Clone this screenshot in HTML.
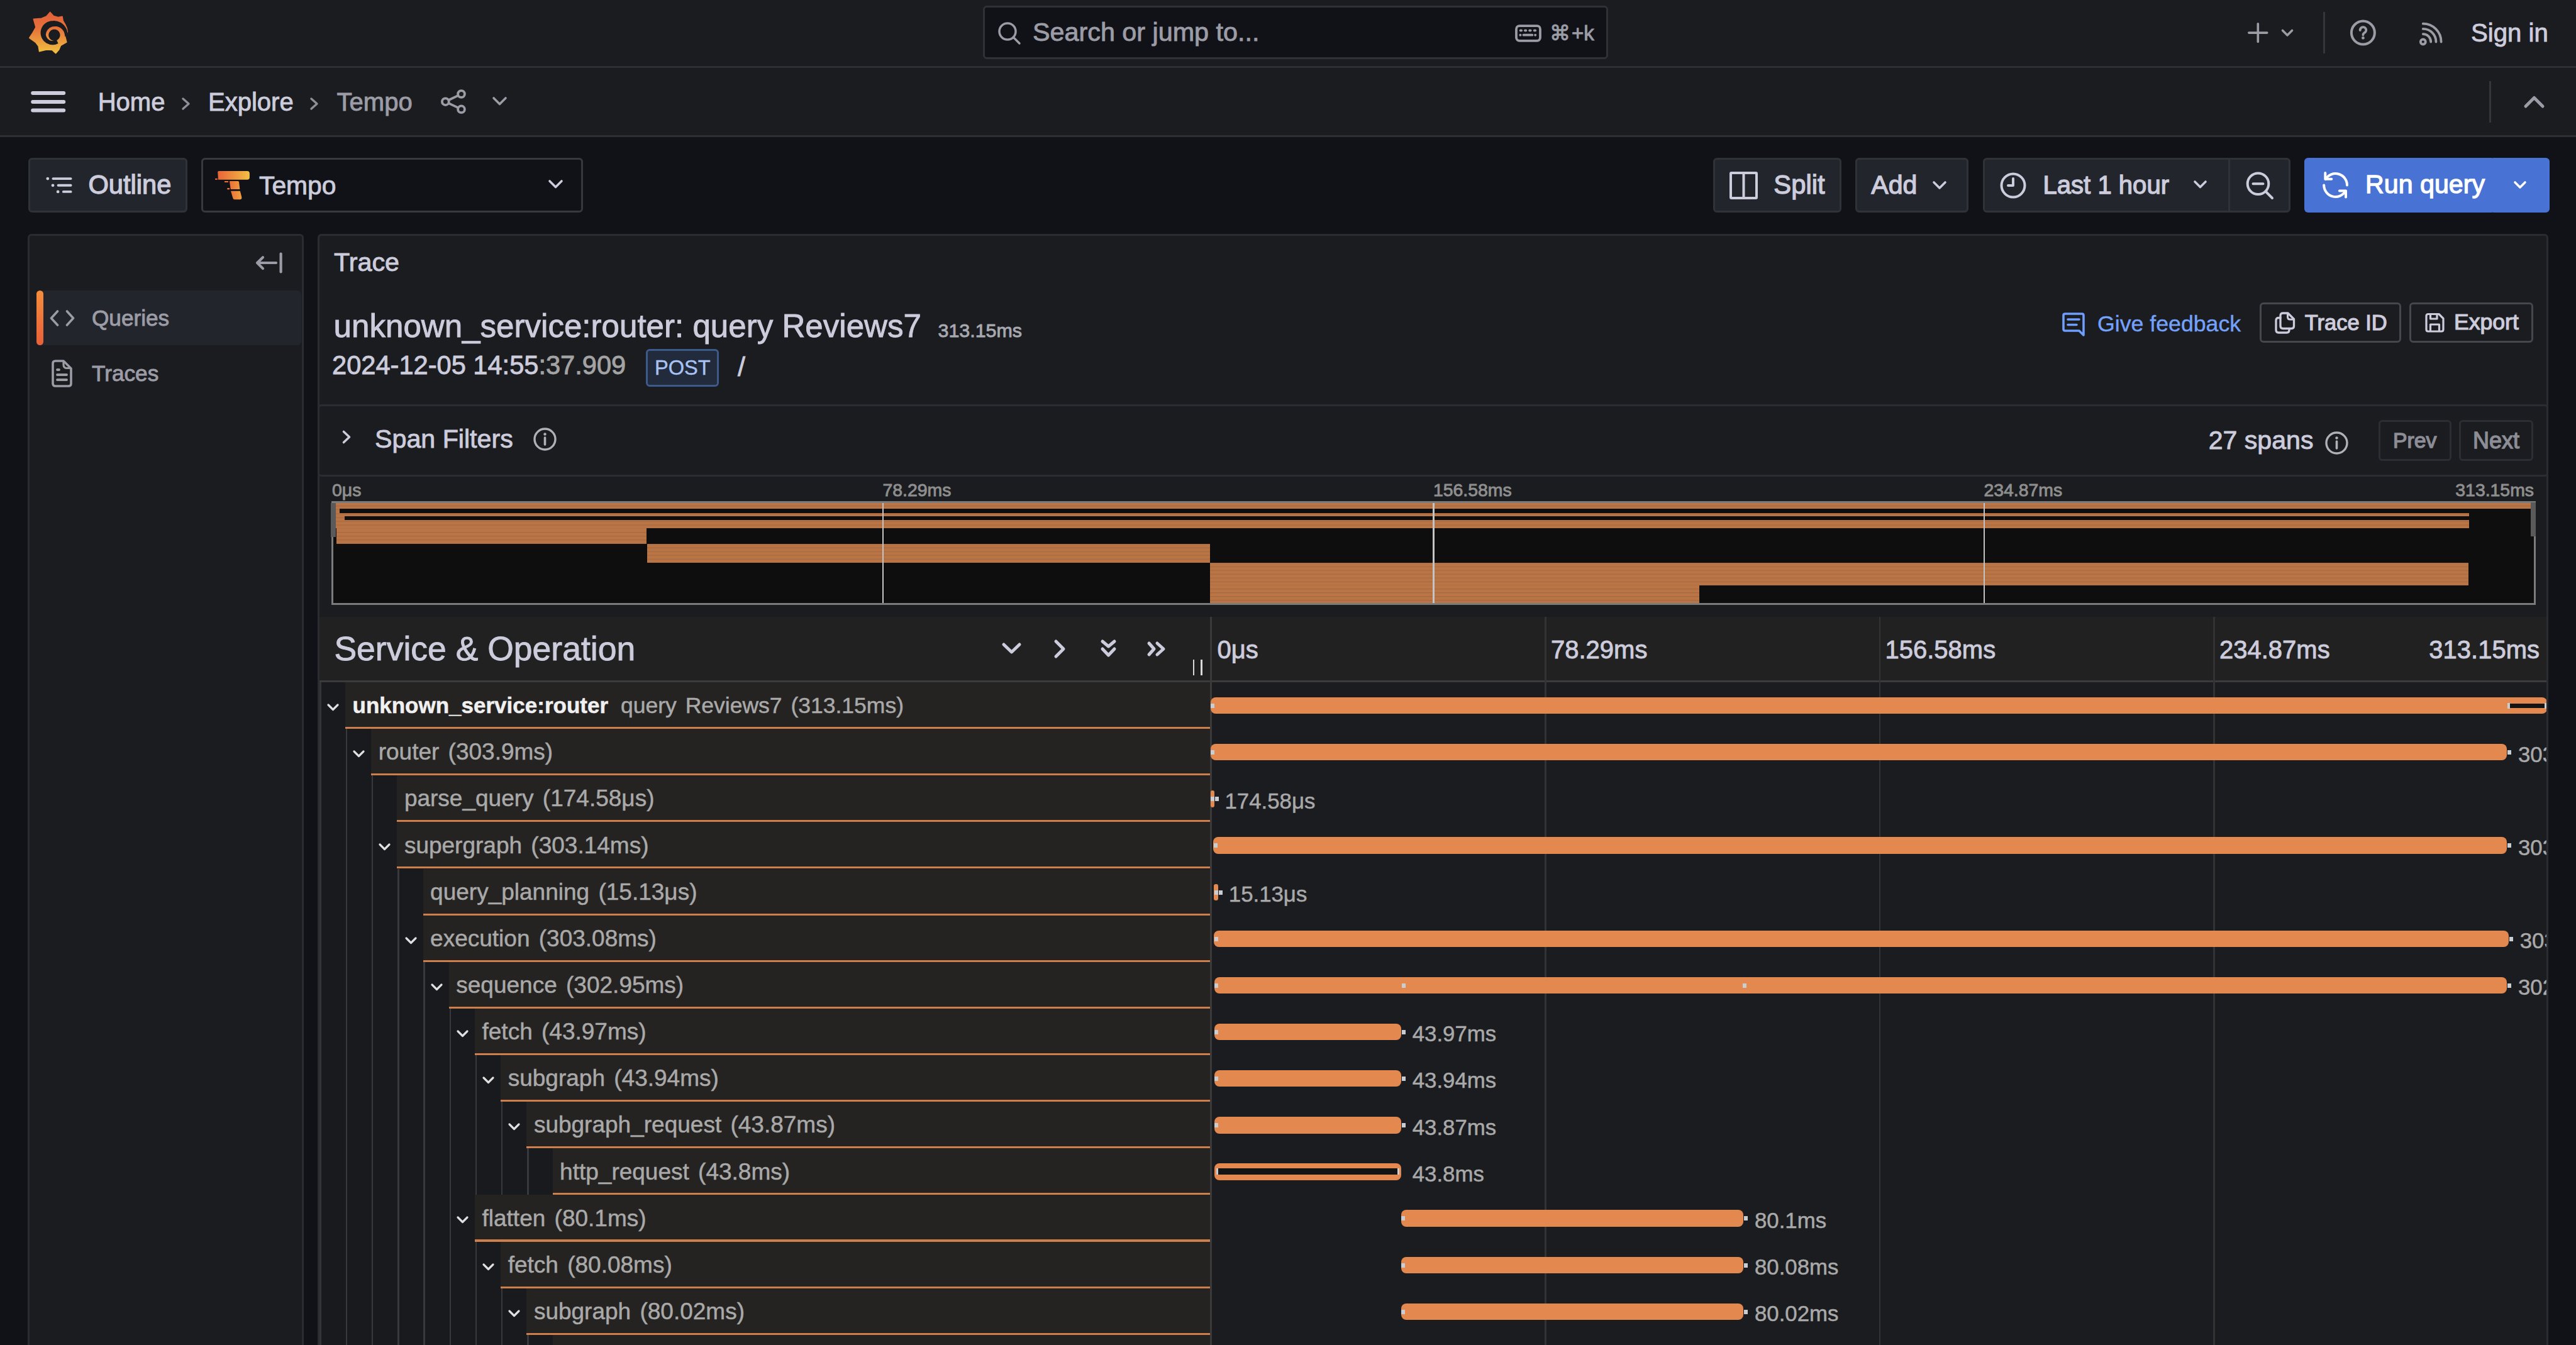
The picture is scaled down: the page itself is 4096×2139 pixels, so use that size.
<!DOCTYPE html>
<html><head><meta charset="utf-8"><style>
html,body{margin:0;padding:0;width:4096px;height:2139px;overflow:hidden;background:#111217;font-family:"Liberation Sans", sans-serif;}
.t{position:absolute;white-space:nowrap;line-height:1;-webkit-text-stroke:0.9px currentColor;}
.r{position:absolute;}
svg.r{overflow:visible}
</style></head><body>
<div class="r" style="left:0.0px;top:0.0px;width:4096.0px;height:105.0px;background:#1b1c20"></div>
<div class="r" style="left:0.0px;top:105.0px;width:4096.0px;height:3.0px;background:#2d2f34"></div>
<svg class="r" style="left:46.0px;top:19.0px;" width="62.0" height="67.0" viewBox="0 0 62 67"><defs><linearGradient id="lg" gradientUnits="userSpaceOnUse" x1="0" y1="0" x2="0" y2="67"><stop offset="0" stop-color="#e0603a"/><stop offset="0.4" stop-color="#e6733a"/><stop offset="1" stop-color="#f2c240"/></linearGradient><clipPath id="bclip"><path d="M33.5 0.4 L39.2 6.6 L46.5 8.6 L53.0 7.4 L54.2 14.2 L57.3 19.3 L60.1 25.5 L61.2 31.7 L57.3 37.9 L59.8 48.1 L50.5 53.2 L47.7 60.0 L42.6 65.6 L36.9 60.5 L27.9 60.0 L16.6 62.8 L15.2 54.3 L11.0 48.7 L0.8 41.3 L5.9 33.4 L11.0 24.4 L7.3 11.4 L20.0 10.3 L27.9 6.9 Z"/></clipPath></defs>
<path fill="url(#lg)" stroke="url(#lg)" stroke-width="1.6" stroke-linejoin="round" d="M33.5 0.4 L39.2 6.6 L46.5 8.6 L53.0 7.4 L54.2 14.2 L57.3 19.3 L60.1 25.5 L61.2 31.7 L57.3 37.9 L59.8 48.1 L50.5 53.2 L47.7 60.0 L42.6 65.6 L36.9 60.5 L27.9 60.0 L16.6 62.8 L15.2 54.3 L11.0 48.7 L0.8 41.3 L5.9 33.4 L11.0 24.4 L7.3 11.4 L20.0 10.3 L27.9 6.9 Z"/>
<path fill="#1b1c20" d="M37.8 14.2 L39.1 14.1 L40.5 14.1 L41.8 14.2 L43.2 14.4 L44.5 14.6 L45.9 15.0 L47.2 15.4 L48.5 15.9 L49.8 16.5 L51.1 17.3 L52.3 18.1 L53.5 19.0 L54.6 20.0 L55.7 21.0 L56.7 22.2 L57.6 23.4 L58.4 24.8 L59.2 26.1 L59.9 27.6 L60.4 29.1 L60.9 30.7 L61.3 32.3 L61.0 33.9 L60.2 35.4 L59.2 36.9 L58.2 38.2 L57.1 39.4 L55.9 40.4 L55.1 41.5 L54.4 42.7 L53.7 43.8 L52.9 44.9 L52.1 45.9 L51.1 46.9 L50.1 47.8 L49.1 48.6 L48.0 49.4 L46.8 50.1 L45.6 50.6 L44.4 51.1 L43.1 51.6 L41.8 51.9 L40.5 52.1 L39.1 52.3 L37.8 52.3 L36.5 52.3 L35.1 52.1 L33.8 51.9 L32.5 51.6 L31.2 51.1 L30.0 50.6 L28.8 50.1 L27.6 49.4 L26.5 48.6 L25.5 47.8 L24.5 46.9 L23.5 45.9 L22.7 44.9 L21.9 43.8 L21.2 42.7 L20.5 41.5 L20.0 40.3 L19.5 39.0 L19.2 37.7 L18.9 36.4 L18.7 35.1 L18.6 33.8 L18.6 32.4 L18.7 31.1 L18.9 29.8 L19.2 28.5 L19.5 27.2 L20.0 25.9 L20.6 24.7 L21.2 23.5 L21.9 22.4 L22.7 21.3 L23.6 20.3 L24.5 19.4 L25.5 18.5 L26.6 17.7 L27.7 17.0 L28.9 16.3 L30.1 15.7 L31.3 15.3 L32.6 14.9 L33.9 14.6 L35.2 14.3 L36.5 14.2 L37.8 14.2 Z"/>
<path fill="url(#lg)" clip-path="url(#bclip)" d="M39.6 45.9 L38.8 46.0 L37.9 46.1 L37.0 46.1 L36.1 46.0 L35.2 45.8 L34.3 45.5 L33.4 45.2 L32.5 44.7 L31.6 44.1 L30.8 43.5 L30.1 42.8 L29.3 42.0 L28.7 41.1 L28.1 40.1 L27.6 39.1 L27.2 38.0 L26.9 36.8 L26.9 35.6 L27.1 34.5 L27.3 33.3 L27.7 32.2 L28.1 31.1 L28.7 30.0 L29.3 29.0 L30.0 28.1 L30.8 27.2 L31.7 26.4 L32.6 25.6 L33.6 25.0 L34.6 24.4 L35.7 24.0 L36.9 23.6 L38.0 23.3 L39.2 23.2 L40.4 23.1 L41.6 23.0 L42.8 23.0 L44.1 23.1 L45.3 23.3 L46.5 23.7 L47.7 24.1 L48.9 24.7 L50.0 25.3 L51.1 26.1 L52.1 27.0 L53.1 27.9 L53.9 29.0 L54.7 30.1 L55.4 31.3 L56.0 32.6 L56.4 34.0 L56.8 35.4 L57.0 36.8 L57.3 38.3 L57.5 39.8 L57.5 41.4 L57.4 43.0 L57.1 44.6 L56.7 46.2 L56.1 47.8 L55.3 49.3 L54.7 51.1 L53.8 52.8 L52.8 54.5 L51.5 56.1 L50.1 57.6 L44.2 45.0 L44.9 44.7 L45.6 44.3 L46.2 43.8 L46.8 43.2 L47.4 42.6 L47.9 42.0 L48.3 41.3 L48.6 40.6 L49.0 39.9 L49.2 39.2 L49.4 38.4 L49.5 37.6 L49.5 36.8 L49.5 36.0 L49.4 35.2 L49.2 34.4 L49.0 33.7 L48.6 33.0 L48.3 32.2 L47.9 31.6 L47.4 31.0 L46.8 30.4 L46.2 29.8 L45.6 29.3 L45.0 28.9 L44.2 28.6 L43.5 28.2 L42.8 28.0 L42.0 27.8 L41.2 27.7 L40.4 27.7 L39.6 27.7 L38.8 27.8 L38.0 28.0 L37.3 28.2 L36.6 28.6 L35.8 28.9 L35.2 29.3 L34.6 29.8 L34.0 30.4 L33.4 31.0 L32.9 31.6 L32.5 32.2 L32.2 33.0 L31.8 33.7 L31.6 34.4 L31.4 35.2 L31.3 36.0 L31.3 36.8 L31.3 37.6 L31.4 38.4 L31.6 39.2 L31.8 39.9 L32.2 40.6 L32.5 41.3 L32.9 42.0 L33.4 42.6 L34.0 43.2 L34.6 43.8 L35.2 44.3 L35.9 44.7 L36.6 45.0 L37.3 45.4 L38.0 45.6 L38.8 45.8 L39.6 45.9 Z"/></svg>
<div class="r" style="left:1563.0px;top:9.0px;width:994.0px;height:85.0px;background:#111217;border:3px solid #2f3136;border-radius:6px;box-sizing:border-box"></div>
<svg class="r" style="left:1585.0px;top:33.0px;" width="40.0" height="38.0" viewBox="0 0 40 38"><circle cx="17" cy="17" r="13" fill="none" stroke="#9b9ca6" stroke-width="3.5"/><line x1="26.5" y1="26.5" x2="36" y2="36" stroke="#9b9ca6" stroke-width="3.5" stroke-linecap="round"/></svg>
<div class="t " style="left:1642.0px;top:31.0px;font-size:41.30px;color:#9b9ca6;font-weight:400;">Search or jump to...</div>
<svg class="r" style="left:2408.0px;top:39.0px;" width="44.0" height="28.0" viewBox="0 0 44 28"><rect x="3" y="2.2" width="38" height="23.6" rx="5" fill="none" stroke="#9b9ca6" stroke-width="3.8"/><g fill="#9b9ca6"><ellipse cx="10.4" cy="9.4" rx="2.7" ry="2"/><ellipse cx="17.6" cy="9.4" rx="2.7" ry="2"/><ellipse cx="24.9" cy="9.4" rx="2.7" ry="2"/><ellipse cx="32.5" cy="9.4" rx="2.7" ry="2"/><circle cx="9.4" cy="16.7" r="2"/><circle cx="33.2" cy="16.7" r="2"/></g><path d="M14.5 16.7 H28.3" stroke="#9b9ca6" stroke-width="3.8" stroke-linecap="round"/></svg>
<div class="t " style="left:2464.0px;top:36.1px;font-size:33.00px;color:#9b9ca6;font-weight:400;">&#8984;<span style="margin-left:2px">+</span>k</div>
<svg class="r" style="left:3572.0px;top:34.0px;" width="38.0" height="38.0" viewBox="0 0 38 38"><path d="M18.3 3.8 V32.5 M3.8 18.1 H32.8" stroke="#9b9ca6" stroke-width="3.6" stroke-linecap="round"/></svg>
<svg class="r" style="left:3625.0px;top:44.0px;" width="24.0" height="16.0" viewBox="0 0 24 16"><path d="M4.5 4.5 L12 12 L19.5 4.5" fill="none" stroke="#9b9ca6" stroke-width="3.6" stroke-linecap="round" stroke-linejoin="round"/></svg>
<div class="r" style="left:3694.0px;top:19.0px;width:3.0px;height:66.0px;background:#34363b"></div>
<svg class="r" style="left:3734.0px;top:29.0px;" width="46.0" height="46.0" viewBox="0 0 46 46"><circle cx="23.4" cy="23.1" r="18.5" fill="none" stroke="#9b9ca6" stroke-width="4"/><path d="M18.7 19 A4.8 4.8 0 1 1 25.3 23.3 Q23.4 24.5 23.4 26.6" fill="none" stroke="#9b9ca6" stroke-width="3.8" stroke-linecap="round"/><circle cx="23.4" cy="31.3" r="2.4" fill="#9b9ca6"/></svg>
<svg class="r" style="left:3844.0px;top:34.0px;" width="42.0" height="42.0" viewBox="0 0 42 42"><circle cx="8.8" cy="32.5" r="4" fill="none" stroke="#9b9ca6" stroke-width="3.8"/><path d="M8.8 20.1 A12.4 12.4 0 0 1 21.2 32.5 M8.8 11.9 A20.6 20.6 0 0 1 29.4 32.5 M8.8 3.7 A28.8 28.8 0 0 1 37.6 32.5" fill="none" stroke="#9b9ca6" stroke-width="3.8" stroke-linecap="round"/></svg>
<div class="t " style="left:3929.0px;top:33.0px;font-size:40.20px;color:#ccccdc;font-weight:400;">Sign in</div>
<div class="r" style="left:0.0px;top:108.0px;width:4096.0px;height:107.0px;background:#1b1c20"></div>
<div class="r" style="left:0.0px;top:215.0px;width:4096.0px;height:3.0px;background:#2d2f34"></div>
<svg class="r" style="left:48.0px;top:144.0px;" width="58.0" height="36.0" viewBox="0 0 58 36"><path d="M4.2 4 H53.2 M4.2 18.1 H53.2 M4.2 31.6 H53.2" stroke="#ccccdc" stroke-width="6" stroke-linecap="round"/></svg>
<div class="t " style="left:155.7px;top:142.1px;font-size:40.00px;color:#ccccdc;font-weight:400;">Home</div>
<svg class="r" style="left:288.0px;top:154.0px;" width="16.0" height="22.0" viewBox="0 0 16 22"><path d="M3 3 L12 11 L3 19" fill="none" stroke="#8e8f99" stroke-width="3.4" stroke-linecap="round" stroke-linejoin="round"/></svg>
<div class="t " style="left:331.0px;top:142.1px;font-size:40.00px;color:#ccccdc;font-weight:400;">Explore</div>
<svg class="r" style="left:492.0px;top:154.0px;" width="16.0" height="22.0" viewBox="0 0 16 22"><path d="M3 3 L12 11 L3 19" fill="none" stroke="#8e8f99" stroke-width="3.4" stroke-linecap="round" stroke-linejoin="round"/></svg>
<div class="t " style="left:535.6px;top:142.1px;font-size:40.00px;color:#9b9ca6;font-weight:400;">Tempo</div>
<svg class="r" style="left:699.0px;top:139.0px;" width="45.0" height="45.0" viewBox="0 0 45 45"><circle cx="34.5" cy="10.5" r="5.4" fill="none" stroke="#9b9ca6" stroke-width="3.8"/><circle cx="9.3" cy="22.7" r="5.4" fill="none" stroke="#9b9ca6" stroke-width="3.8"/><circle cx="34.5" cy="34.8" r="5.4" fill="none" stroke="#9b9ca6" stroke-width="3.8"/><path d="M14.2 20.3 L29.6 12.9 M14.2 25.1 L29.6 32.4" stroke="#9b9ca6" stroke-width="3.8"/></svg>
<svg class="r" style="left:782.0px;top:153.0px;" width="25.0" height="18.0" viewBox="0 0 25 18"><path d="M3 3 L12.5 12.5 L22 3" fill="none" stroke="#9b9ca6" stroke-width="3.6" stroke-linecap="round" stroke-linejoin="round"/></svg>
<div class="r" style="left:3958.0px;top:129.0px;width:3.0px;height:66.0px;background:#34363b"></div>
<svg class="r" style="left:4013.0px;top:151.0px;" width="33.0" height="22.0" viewBox="0 0 33 22"><path d="M3 18 L16.5 4.5 L30 18" fill="none" stroke="#9b9ca6" stroke-width="5" stroke-linecap="round" stroke-linejoin="round"/></svg>
<div class="r" style="left:44.6px;top:251.0px;width:253.0px;height:87.0px;background:#22252b;border:3px solid #2f3237;border-radius:6px;box-sizing:border-box"></div>
<svg class="r" style="left:72.0px;top:280.0px;" width="46.0" height="30.0" viewBox="0 0 46 30"><g fill="#ccccdc"><circle cx="3.8" cy="4.1" r="2.4"/><circle cx="12" cy="14.8" r="2.4"/><circle cx="20.1" cy="24.9" r="2.4"/></g><path d="M12.4 4.1 H40.6 M20.6 14.8 H40.6 M28.8 24.9 H40.6" stroke="#ccccdc" stroke-width="3.9" stroke-linecap="round"/></svg>
<div class="t " style="left:140.5px;top:273.1px;font-size:41.60px;color:#ccccdc;font-weight:400;-webkit-text-stroke:1.3px currentColor">Outline</div>
<div class="r" style="left:320.0px;top:251.0px;width:607.0px;height:87.0px;background:#111217;border:3px solid #37393e;border-radius:6px;box-sizing:border-box"></div>
<svg class="r" style="left:340.0px;top:270.0px;" width="58.0" height="50.0" viewBox="0 0 58 50"><defs><linearGradient id="tg" gradientUnits="userSpaceOnUse" x1="6" y1="0" x2="57" y2="0"><stop offset="0" stop-color="#e8643a"/><stop offset="1" stop-color="#f3c045"/></linearGradient><linearGradient id="tg2" gradientUnits="userSpaceOnUse" x1="25" y1="0" x2="45" y2="0"><stop offset="0" stop-color="#ea7036"/><stop offset="1" stop-color="#f2a13f"/></linearGradient></defs>
<path fill="url(#tg)" d="M6.2 3.5 Q6.2 1.9 8 1.9 H53 Q56.9 1.9 56.9 6 V12 Q56.9 15.8 53 15.8 H7 Z"/>
<rect x="2" y="13.8" width="3.8" height="2" fill="#e8643a"/>
<path fill="url(#tg2)" d="M25 17.9 H38.5 Q39.8 17.9 40 19.5 L41.4 31 H26.7 Z"/>
<rect x="17" y="18" width="6" height="2" fill="#ea7036"/>
<rect x="21.3" y="29" width="3.7" height="2.4" fill="#ea7036"/>
<path fill="url(#tg2)" d="M27 33.8 H41.8 L44.3 43.5 Q44.8 47.3 41.5 47.3 H33 Q30.8 47.3 30.3 45 Z"/></svg>
<div class="t " style="left:412.0px;top:274.5px;font-size:40.80px;color:#ccccdc;font-weight:400;">Tempo</div>
<svg class="r" style="left:871.0px;top:285.0px;" width="25.0" height="18.0" viewBox="0 0 25 18"><path d="M3 3 L12.5 12.5 L22 3" fill="none" stroke="#ccccdc" stroke-width="3.6" stroke-linecap="round" stroke-linejoin="round"/></svg>
<div class="r" style="left:2724.0px;top:251.0px;width:204.0px;height:87.0px;background:#22252b;border:3px solid #2f3237;border-radius:6px;box-sizing:border-box"></div>
<svg class="r" style="left:2750.0px;top:273.0px;" width="45.0" height="44.0" viewBox="0 0 45 44"><rect x="2" y="2" width="41" height="40" rx="1" fill="none" stroke="#ccccdc" stroke-width="4"/><line x1="22.5" y1="2" x2="22.5" y2="42" stroke="#ccccdc" stroke-width="4"/></svg>
<div class="t " style="left:2820.3px;top:272.9px;font-size:41.80px;color:#ccccdc;font-weight:400;-webkit-text-stroke:1.3px currentColor">Split</div>
<div class="r" style="left:2950.0px;top:251.0px;width:180.0px;height:87.0px;background:#22252b;border:3px solid #2f3237;border-radius:6px;box-sizing:border-box"></div>
<div class="t " style="left:2975.3px;top:273.5px;font-size:41.10px;color:#ccccdc;font-weight:400;-webkit-text-stroke:1.3px currentColor">Add</div>
<svg class="r" style="left:3072.0px;top:287.0px;" width="24.0" height="20.0" viewBox="0 0 24 20"><path d="M3 3 L12 12 L21 3" fill="none" stroke="#ccccdc" stroke-width="3.6" stroke-linecap="round" stroke-linejoin="round"/></svg>
<div class="r" style="left:3152.6px;top:251.0px;width:489.4px;height:87.0px;background:#22252b;border:3px solid #2f3237;border-radius:6px;box-sizing:border-box"></div>
<div class="r" style="left:3543.0px;top:254.0px;width:3.0px;height:81.0px;background:#2f3237"></div>
<svg class="r" style="left:3179.0px;top:272.5px;" width="44.0" height="44.0" viewBox="0 0 44 44"><circle cx="22" cy="22" r="18.5" fill="none" stroke="#ccccdc" stroke-width="4"/><path d="M22 11 V22 H14" fill="none" stroke="#ccccdc" stroke-width="4" stroke-linecap="round" stroke-linejoin="round"/></svg>
<div class="t " style="left:3248.5px;top:274.4px;font-size:40.10px;color:#ccccdc;font-weight:400;-webkit-text-stroke:1.3px currentColor">Last 1 hour</div>
<svg class="r" style="left:3487.0px;top:286.0px;" width="24.0" height="18.0" viewBox="0 0 24 18"><path d="M3 3 L11.5 11.5 L20 3" fill="none" stroke="#ccccdc" stroke-width="3.6" stroke-linecap="round" stroke-linejoin="round"/></svg>
<svg class="r" style="left:3571.0px;top:273.0px;" width="46.0" height="46.0" viewBox="0 0 46 46"><circle cx="19.5" cy="19.2" r="16.8" fill="none" stroke="#ccccdc" stroke-width="4"/><path d="M11.5 19.2 H27.5 M31.5 31.5 L42 42" stroke="#ccccdc" stroke-width="4" stroke-linecap="round"/></svg>
<div class="r" style="left:3664.0px;top:251.0px;width:299.0px;height:87.0px;background:#4872d4;border-radius:6px 1px 1px 6px"></div>
<div class="r" style="left:3962.5px;top:251.0px;width:91.5px;height:87.0px;background:#4872d4;border-radius:1px 6px 6px 1px"></div>
<svg class="r" style="left:3691.0px;top:273.0px;" width="46.0" height="46.0" viewBox="0 0 46 46"><path d="M6.8 12.1 A18.4 18.4 0 0 1 41 21.6 M4.2 21.6 A18.4 18.4 0 0 0 38.5 30.8" fill="none" stroke="#ffffff" stroke-width="4" stroke-linecap="round"/><path d="M6.3 2 V11.8 H16.3 M28.9 30.6 H39 V40.6" fill="none" stroke="#ffffff" stroke-width="4" stroke-linecap="round" stroke-linejoin="round"/></svg>
<div class="t " style="left:3761.0px;top:273.4px;font-size:41.20px;color:#ffffff;font-weight:400;-webkit-text-stroke:1.3px currentColor">Run query</div>
<svg class="r" style="left:3996.0px;top:287.0px;" width="23.0" height="17.0" viewBox="0 0 23 17"><path d="M3 3 L11 11 L19 3" fill="none" stroke="#ffffff" stroke-width="3.6" stroke-linecap="round" stroke-linejoin="round"/></svg>
<div class="r" style="left:44.0px;top:372.0px;width:439.0px;height:1800.0px;background:#1b1c20;border:3px solid #2a2c31;border-radius:6px;box-sizing:border-box"></div>
<svg class="r" style="left:406.0px;top:399.0px;" width="46.0" height="37.0" viewBox="0 0 46 37"><path d="M3 19 H33 M12 10.2 L3 19 L12 27.9" fill="none" stroke="#9b9ca6" stroke-width="4.2" stroke-linecap="round" stroke-linejoin="round"/><line x1="40.6" y1="4.5" x2="40.6" y2="33.5" stroke="#9b9ca6" stroke-width="4.2" stroke-linecap="round"/></svg>
<div class="r" style="left:58.0px;top:462.0px;width:421.0px;height:87.0px;background:#22252b;border-radius:6px"></div>
<div class="r" style="left:57.5px;top:462.0px;width:11.5px;height:87.0px;background:linear-gradient(#f58d3c,#e8603a);border-radius:6px"></div>
<svg class="r" style="left:78.0px;top:491.0px;" width="42.0" height="30.0" viewBox="0 0 42 30"><path d="M13.5 4 L3.5 15 L13.5 26 M28.5 4 L38.5 15 L28.5 26" fill="none" stroke="#9b9ca6" stroke-width="3.6" stroke-linecap="round" stroke-linejoin="round"/></svg>
<div class="t " style="left:146.0px;top:488.0px;font-size:35.20px;color:#9b9ca6;font-weight:400;">Queries</div>
<svg class="r" style="left:80.0px;top:571.0px;" width="38.0" height="46.0" viewBox="0 0 38 46"><path d="M4 7 Q4 3 8 3 H21 L33 15 V39 Q33 43 29 43 H8 Q4 43 4 39 Z" fill="none" stroke="#9b9ca6" stroke-width="3.6" stroke-linejoin="round"/><path d="M21 3.5 V9 Q21 14.5 26.5 14.5 H32.5" fill="none" stroke="#9b9ca6" stroke-width="3.2"/><path d="M11 17 H14 M11 25 H26 M11 33 H26" fill="none" stroke="#9b9ca6" stroke-width="3.8" stroke-linecap="round"/></svg>
<div class="t " style="left:146.0px;top:575.7px;font-size:35.20px;color:#9b9ca6;font-weight:400;">Traces</div>
<div class="r" style="left:505.0px;top:372.0px;width:3547.0px;height:1800.0px;background:#1b1c20;border:3px solid #2a2c31;border-radius:6px;box-sizing:border-box"></div>
<div class="t " style="left:531.0px;top:396.6px;font-size:41.30px;color:#ccccdc;font-weight:400;">Trace</div>
<div class="t " style="left:530.6px;top:492.7px;font-size:51.10px;color:#ccccdc;font-weight:400;">unknown_service:router: query Reviews7</div>
<div class="t " style="left:1491.5px;top:510.3px;font-size:30.40px;color:#a7a8b0;font-weight:400;">313.15ms</div>
<div class="t " style="left:528.0px;top:560.4px;font-size:41.60px;color:#ccccdc;font-weight:400;">2024-12-05 14:55<span style="color:#a3a3a3">:37.909</span></div>
<div class="r" style="left:1026.5px;top:554.5px;width:116.5px;height:60.0px;background:#222b3c;border:3px solid #3d5a8c;border-radius:6px;box-sizing:border-box"></div>
<div class="t " style="left:1041.0px;top:569.2px;font-size:32.60px;color:#a8c3f3;font-weight:400;-webkit-text-stroke:0.4px currentColor">POST</div>
<div class="t " style="left:1173.0px;top:562.1px;font-size:43.00px;color:#ccccdc;font-weight:400;">/</div>
<svg class="r" style="left:3278.0px;top:497.0px;" width="38.0" height="38.0" viewBox="0 0 38 38"><path d="M3 4.5 Q3 2 5.5 2 H32.5 Q35 2 35 4.5 V36 L28 29 H5.5 Q3 29 3 26.5 Z" fill="none" stroke="#6e9fff" stroke-width="3.6" stroke-linejoin="round"/><path d="M10 11 H28 M10 19.5 H24" stroke="#6e9fff" stroke-width="3.6" stroke-linecap="round"/></svg>
<div class="t " style="left:3335.0px;top:497.8px;font-size:35.70px;color:#74a2fa;font-weight:400;-webkit-text-stroke:0.4px currentColor">Give feedback</div>
<div class="r" style="left:3593.0px;top:481.0px;width:225.0px;height:64.0px;background:#1b1c20;border:3px solid #45474d;border-radius:6px;box-sizing:border-box"></div>
<svg class="r" style="left:3616.0px;top:496.0px;" width="34.0" height="36.0" viewBox="0 0 34 36"><path d="M10 6 Q10 2 14 2 H22 L31.5 11.5 V22.5 Q31.5 26.5 27.5 26.5 H14 Q10 26.5 10 22.5 Z" fill="none" stroke="#ccccdc" stroke-width="3.3" stroke-linejoin="round"/><path d="M21.5 2.5 V8 Q21.5 12 25.5 12 H31" fill="none" stroke="#ccccdc" stroke-width="3"/><path d="M10 9.5 H7 Q3 9.5 3 13.5 V29 Q3 33 7 33 H20 Q24 33 24 29 V26.5" fill="none" stroke="#ccccdc" stroke-width="3.3" stroke-linejoin="round" stroke-linecap="round"/></svg>
<div class="t " style="left:3664.7px;top:496.3px;font-size:34.50px;color:#ccccdc;font-weight:400;-webkit-text-stroke:1.2px currentColor">Trace ID</div>
<div class="r" style="left:3831.0px;top:481.0px;width:197.0px;height:64.0px;background:#1b1c20;border:3px solid #45474d;border-radius:6px;box-sizing:border-box"></div>
<svg class="r" style="left:3855.0px;top:497.0px;" width="33.0" height="33.0" viewBox="0 0 33 33"><path d="M3 5.5 Q3 2.5 6 2.5 H23 L30 9.5 V27 Q30 30 27 30 H6 Q3 30 3 27 Z" fill="none" stroke="#ccccdc" stroke-width="3.2" stroke-linejoin="round"/><path d="M9.5 2.5 V10 H20 V2.5 M9.5 30 V19 H23.5 V30" fill="none" stroke="#ccccdc" stroke-width="3.2" stroke-linejoin="round"/></svg>
<div class="t " style="left:3902.0px;top:495.4px;font-size:35.60px;color:#ccccdc;font-weight:400;-webkit-text-stroke:1.2px currentColor">Export</div>
<div class="r" style="left:505.0px;top:643.0px;width:3547.0px;height:114.5px;border:3px solid #2a2c31;border-radius:6px;box-sizing:border-box"></div>
<svg class="r" style="left:543.0px;top:683.0px;" width="17.0" height="24.0" viewBox="0 0 17 24"><path d="M3.5 3.5 L12.5 12 L3.5 20.5" fill="none" stroke="#ccccdc" stroke-width="3.6" stroke-linecap="round" stroke-linejoin="round"/></svg>
<div class="t " style="left:596.0px;top:678.1px;font-size:41.20px;color:#ccccdc;font-weight:400;">Span Filters</div>
<svg class="r" style="left:847.0px;top:679.0px;" width="39.0" height="39.0" viewBox="0 0 39 39"><circle cx="19.5" cy="19.5" r="16.5" fill="none" stroke="#b0b1b8" stroke-width="3.4"/><path d="M19.5 17 V28" stroke="#b0b1b8" stroke-width="3.6" stroke-linecap="round"/><circle cx="19.5" cy="11.5" r="2.2" fill="#b0b1b8"/></svg>
<div class="t " style="left:3511.7px;top:680.2px;font-size:41.10px;color:#ccccdc;font-weight:400;">27 spans</div>
<svg class="r" style="left:3696.0px;top:685.0px;" width="39.0" height="39.0" viewBox="0 0 39 39"><circle cx="19.5" cy="19.5" r="16.5" fill="none" stroke="#b0b1b8" stroke-width="3.4"/><path d="M19.5 17 V28" stroke="#b0b1b8" stroke-width="3.6" stroke-linecap="round"/><circle cx="19.5" cy="11.5" r="2.2" fill="#b0b1b8"/></svg>
<div class="r" style="left:3781.5px;top:668.4px;width:116.5px;height:64.3px;border:3px solid #2c2e33;border-radius:6px;box-sizing:border-box"></div>
<div class="t " style="left:3805.0px;top:684.4px;font-size:33.80px;color:#8c8d96;font-weight:400;-webkit-text-stroke:1.3px currentColor">Prev</div>
<div class="r" style="left:3909.7px;top:668.4px;width:118.0px;height:64.3px;border:3px solid #2c2e33;border-radius:6px;box-sizing:border-box"></div>
<div class="t " style="left:3932.0px;top:682.5px;font-size:36.00px;color:#8c8d96;font-weight:400;-webkit-text-stroke:1.3px currentColor">Next</div>
<div class="t " style="left:528.0px;top:764.8px;font-size:28.40px;color:#8e8e8e;font-weight:400;">0&#956;s</div>
<div class="t " style="left:1403.5px;top:764.8px;font-size:28.40px;color:#8e8e8e;font-weight:400;">78.29ms</div>
<div class="t " style="left:2279.0px;top:764.8px;font-size:28.40px;color:#8e8e8e;font-weight:400;">156.58ms</div>
<div class="t " style="left:3154.5px;top:764.8px;font-size:28.40px;color:#8e8e8e;font-weight:400;">234.87ms</div>
<div class="t " style="right:67.0px;top:764.8px;font-size:28.40px;color:#8e8e8e;font-weight:400;">313.15ms</div>
<div class="r" style="left:527.0px;top:797.0px;width:3505.0px;height:165.0px;background:#0e0e0f;border:3px solid #7b7b7b;box-sizing:border-box"></div>
<div class="r" style="left:533.0px;top:800.0px;width:3493.0px;height:8.6px;background:repeating-linear-gradient(to bottom,#b97545 0px,#b97545 3.5px,#a8693f 4.5px,#b97545 6px);background-position:0 0.0px"></div>
<div class="r" style="left:533.0px;top:808.6px;width:3393.0px;height:31.4px;background:repeating-linear-gradient(to bottom,#b97545 0px,#b97545 3.5px,#a8693f 4.5px,#b97545 6px);background-position:0 3.4px"></div>
<div class="r" style="left:540.0px;top:808.6px;width:3386.0px;height:7.0px;background:#0e0e0f"></div>
<div class="r" style="left:548.0px;top:821.4px;width:3378.0px;height:5.9px;background:#0e0e0f"></div>
<div class="r" style="left:535.0px;top:840.0px;width:493.0px;height:24.5px;background:repeating-linear-gradient(to bottom,#b97545 0px,#b97545 3.5px,#a8693f 4.5px,#b97545 6px);background-position:0 2.0px"></div>
<div class="r" style="left:1029.0px;top:864.5px;width:895.0px;height:30.0px;background:repeating-linear-gradient(to bottom,#b97545 0px,#b97545 3.5px,#a8693f 4.5px,#b97545 6px);background-position:0 1.5px"></div>
<div class="r" style="left:1924.0px;top:894.5px;width:2001.0px;height:36.5px;background:repeating-linear-gradient(to bottom,#b97545 0px,#b97545 3.5px,#a8693f 4.5px,#b97545 6px);background-position:0 1.5px"></div>
<div class="r" style="left:1924.0px;top:931.0px;width:778.0px;height:28.0px;background:repeating-linear-gradient(to bottom,#b97545 0px,#b97545 3.5px,#a8693f 4.5px,#b97545 6px);background-position:0 1.0px"></div>
<div class="r" style="left:1402.5px;top:800.0px;width:2.5px;height:159.0px;background:#c4c4c4"></div>
<div class="r" style="left:2278.0px;top:800.0px;width:2.5px;height:159.0px;background:#c4c4c4"></div>
<div class="r" style="left:3153.5px;top:800.0px;width:2.5px;height:159.0px;background:#c4c4c4"></div>
<div class="r" style="left:525.5px;top:800.0px;width:8.0px;height:54.0px;background:#5a5a5a"></div>
<div class="r" style="left:4024.0px;top:799.0px;width:8.0px;height:54.0px;background:#5a5a5a"></div>
<div class="r" style="left:508.0px;top:980.5px;width:3541.0px;height:101.5px;background:#212121"></div>
<div class="r" style="left:508.0px;top:1082.0px;width:3541.0px;height:3.0px;background:#3b3b3b"></div>
<div class="t " style="left:531.4px;top:1004.7px;font-size:53.50px;color:#ccccdc;font-weight:400;">Service &amp; Operation</div>
<svg class="r" style="left:1592.0px;top:1021.0px;" width="33.0" height="21.0" viewBox="0 0 33 21"><path d="M4 4 L16.5 16 L29 4" fill="none" stroke="#ccccdc" stroke-width="5" stroke-linecap="round" stroke-linejoin="round"/></svg>
<svg class="r" style="left:1675.0px;top:1016.0px;" width="21.0" height="32.0" viewBox="0 0 21 32"><path d="M4 4 L16 16 L4 28" fill="none" stroke="#ccccdc" stroke-width="5" stroke-linecap="round" stroke-linejoin="round"/></svg>
<svg class="r" style="left:1749.0px;top:1016.0px;" width="27.0" height="32.0" viewBox="0 0 27 32"><path d="M4 4 L13.5 12 L23 4 M4 16 L13.5 26 L23 16" fill="none" stroke="#ccccdc" stroke-width="5" stroke-linecap="round" stroke-linejoin="round"/></svg>
<svg class="r" style="left:1823.0px;top:1019.0px;" width="33.0" height="26.0" viewBox="0 0 33 26"><path d="M4 4 L12 13 L4 22 M17 4 L27 13 L17 22" fill="none" stroke="#ccccdc" stroke-width="5" stroke-linecap="round" stroke-linejoin="round"/></svg>
<div class="r" style="left:1896.6px;top:1049.0px;width:2.5px;height:24.6px;background:#d8d8d8"></div>
<div class="r" style="left:1909.0px;top:1049.0px;width:2.5px;height:24.6px;background:#d8d8d8"></div>
<div class="r" style="left:1924.0px;top:980.5px;width:3.0px;height:1200.0px;background:#3a3a3a"></div>
<div class="t " style="left:1935.5px;top:1013.1px;font-size:40.00px;color:#ccccdc;font-weight:400;">0&#956;s</div>
<div class="t " style="left:2466.0px;top:1013.1px;font-size:40.00px;color:#ccccdc;font-weight:400;">78.29ms</div>
<div class="t " style="left:2997.5px;top:1013.1px;font-size:40.00px;color:#ccccdc;font-weight:400;">156.58ms</div>
<div class="t " style="left:3529.0px;top:1013.1px;font-size:40.00px;color:#ccccdc;font-weight:400;">234.87ms</div>
<div class="t " style="right:58.0px;top:1013.1px;font-size:40.00px;color:#ccccdc;font-weight:400;">313.15ms</div>
<div class="r" style="left:2456.0px;top:980.5px;width:2.5px;height:1200.0px;background:#333333"></div>
<div class="r" style="left:2987.5px;top:980.5px;width:2.5px;height:1200.0px;background:#333333"></div>
<div class="r" style="left:3519.0px;top:980.5px;width:2.5px;height:1200.0px;background:#333333"></div>
<div class="r" style="left:508px;top:1085px;width:3541px;height:1054px;overflow:hidden">
<div class="r" style="left:0.0px;top:0.0px;width:1416.0px;height:1054.0px;background:#191a1e"></div>
<div class="r" style="left:0.0px;top:0.0px;width:2.5px;height:1054.0px;background:#333438"></div>
<div class="r" style="left:41.0px;top:0.0px;width:1375.0px;height:74.1px;background:#242321"></div>
<div class="r" style="left:41.0px;top:70.9px;width:1375.0px;height:3.2px;background:#cf7f4b"></div>
<svg class="r" style="left:11.0px;top:33.0px" width="21" height="14" viewBox="0 0 21 14"><path d="M3 3 L10.5 10.5 L18 3" fill="none" stroke="#e0e0e0" stroke-width="3.2" stroke-linecap="round" stroke-linejoin="round"/></svg>
<div class="t" style="left:52.5px;top:18.2px;font-size:37.00px;color:#a9a9a9;-webkit-text-stroke:0.5px currentColor;word-spacing:4px"><b style="color:#f0f0f0;font-weight:700;font-size:35px">unknown_service:router</b><span style="display:inline-block;width:20px"></span><span style="font-size:35.5px">query Reviews7 (313.15ms)</span></div>
<div class="r" style="left:1416.5px;top:24.0px;width:2125.5px;height:26.4px;background:#e3894f;border-radius:8.0px"></div>
<div class="r" style="left:1417.0px;top:34.0px;width:6.0px;height:7.0px;background:#c9cdd2"></div>
<div class="r" style="left:3481.0px;top:34.0px;width:60.0px;height:7.0px;background:#141414"></div>
<div class="r" style="left:3479.0px;top:33.0px;width:4.0px;height:9.0px;background:#c9cdd2"></div>
<div class="r" style="left:3538.0px;top:33.0px;width:4.0px;height:9.0px;background:#c9cdd2"></div>
<div class="r" style="left:82.2px;top:74.1px;width:1333.8px;height:74.1px;background:#242321"></div>
<div class="r" style="left:82.2px;top:145.1px;width:1333.8px;height:3.2px;background:#cf7f4b"></div>
<div class="r" style="left:41.7px;top:74.1px;width:2.5px;height:74.7px;background:#38393d"></div>
<svg class="r" style="left:52.2px;top:107.1px" width="21" height="14" viewBox="0 0 21 14"><path d="M3 3 L10.5 10.5 L18 3" fill="none" stroke="#e0e0e0" stroke-width="3.2" stroke-linecap="round" stroke-linejoin="round"/></svg>
<div class="t" style="left:93.7px;top:92.3px;font-size:37.00px;color:#a9a9a9;-webkit-text-stroke:0.5px currentColor;word-spacing:4px">router (303.9ms)</div>
<div class="r" style="left:1416.5px;top:98.1px;width:2061.5px;height:26.4px;background:#e3894f;border-radius:8.0px"></div>
<div class="r" style="left:1417.0px;top:108.1px;width:6.0px;height:7.0px;background:#c9cdd2"></div>
<div class="r" style="left:3479.0px;top:108.1px;width:6.0px;height:7.0px;background:#c9cdd2"></div>
<div class="t" style="left:3496.0px;top:97.5px;font-size:34.80px;color:#a9a9a9;-webkit-text-stroke:0.5px currentColor">303.9ms</div>
<div class="r" style="left:123.4px;top:148.3px;width:1292.6px;height:74.1px;background:#242321"></div>
<div class="r" style="left:123.4px;top:219.2px;width:1292.6px;height:3.2px;background:#cf7f4b"></div>
<div class="r" style="left:41.7px;top:148.3px;width:2.5px;height:74.7px;background:#38393d"></div>
<div class="r" style="left:82.9px;top:148.3px;width:2.5px;height:74.7px;background:#38393d"></div>
<div class="t" style="left:134.9px;top:166.4px;font-size:37.00px;color:#a9a9a9;-webkit-text-stroke:0.5px currentColor;word-spacing:4px">parse_query (174.58&#956;s)</div>
<div class="r" style="left:1416.5px;top:172.3px;width:6.5px;height:26.4px;background:#e3894f;border-radius:3.2px"></div>
<div class="r" style="left:1417.0px;top:182.3px;width:6.0px;height:7.0px;background:#c9cdd2"></div>
<div class="r" style="left:1423.5px;top:182.3px;width:6.0px;height:7.0px;background:#c9cdd2"></div>
<div class="t" style="left:1439.5px;top:171.6px;font-size:34.80px;color:#a9a9a9;-webkit-text-stroke:0.5px currentColor">174.58&#956;s</div>
<div class="r" style="left:123.4px;top:222.4px;width:1292.6px;height:74.1px;background:#242321"></div>
<div class="r" style="left:123.4px;top:293.3px;width:1292.6px;height:3.2px;background:#cf7f4b"></div>
<div class="r" style="left:41.7px;top:222.4px;width:2.5px;height:74.7px;background:#38393d"></div>
<div class="r" style="left:82.9px;top:222.4px;width:2.5px;height:74.7px;background:#38393d"></div>
<svg class="r" style="left:93.4px;top:255.4px" width="21" height="14" viewBox="0 0 21 14"><path d="M3 3 L10.5 10.5 L18 3" fill="none" stroke="#e0e0e0" stroke-width="3.2" stroke-linecap="round" stroke-linejoin="round"/></svg>
<div class="t" style="left:134.9px;top:240.6px;font-size:37.00px;color:#a9a9a9;-webkit-text-stroke:0.5px currentColor;word-spacing:4px">supergraph (303.14ms)</div>
<div class="r" style="left:1421.0px;top:246.4px;width:2057.0px;height:26.4px;background:#e3894f;border-radius:8.0px"></div>
<div class="r" style="left:1421.5px;top:256.4px;width:6.0px;height:7.0px;background:#c9cdd2"></div>
<div class="r" style="left:3479.0px;top:256.4px;width:6.0px;height:7.0px;background:#c9cdd2"></div>
<div class="t" style="left:3496.0px;top:245.7px;font-size:34.80px;color:#a9a9a9;-webkit-text-stroke:0.5px currentColor">303.14ms</div>
<div class="r" style="left:164.6px;top:296.5px;width:1251.4px;height:74.1px;background:#242321"></div>
<div class="r" style="left:164.6px;top:367.5px;width:1251.4px;height:3.2px;background:#cf7f4b"></div>
<div class="r" style="left:41.7px;top:296.5px;width:2.5px;height:74.7px;background:#38393d"></div>
<div class="r" style="left:82.9px;top:296.5px;width:2.5px;height:74.7px;background:#38393d"></div>
<div class="r" style="left:124.1px;top:296.5px;width:2.5px;height:74.7px;background:#38393d"></div>
<div class="t" style="left:176.1px;top:314.7px;font-size:37.00px;color:#a9a9a9;-webkit-text-stroke:0.5px currentColor;word-spacing:4px">query_planning (15.13&#956;s)</div>
<div class="r" style="left:1422.3px;top:320.5px;width:6.5px;height:26.4px;background:#e3894f;border-radius:3.2px"></div>
<div class="r" style="left:1422.8px;top:330.5px;width:6.0px;height:7.0px;background:#c9cdd2"></div>
<div class="r" style="left:1429.8px;top:330.5px;width:6.0px;height:7.0px;background:#c9cdd2"></div>
<div class="t" style="left:1445.8px;top:319.9px;font-size:34.80px;color:#a9a9a9;-webkit-text-stroke:0.5px currentColor">15.13&#956;s</div>
<div class="r" style="left:164.6px;top:370.7px;width:1251.4px;height:74.1px;background:#242321"></div>
<div class="r" style="left:164.6px;top:441.6px;width:1251.4px;height:3.2px;background:#cf7f4b"></div>
<div class="r" style="left:41.7px;top:370.7px;width:2.5px;height:74.7px;background:#38393d"></div>
<div class="r" style="left:82.9px;top:370.7px;width:2.5px;height:74.7px;background:#38393d"></div>
<div class="r" style="left:124.1px;top:370.7px;width:2.5px;height:74.7px;background:#38393d"></div>
<svg class="r" style="left:134.6px;top:403.7px" width="21" height="14" viewBox="0 0 21 14"><path d="M3 3 L10.5 10.5 L18 3" fill="none" stroke="#e0e0e0" stroke-width="3.2" stroke-linecap="round" stroke-linejoin="round"/></svg>
<div class="t" style="left:176.1px;top:388.8px;font-size:37.00px;color:#a9a9a9;-webkit-text-stroke:0.5px currentColor;word-spacing:4px">execution (303.08ms)</div>
<div class="r" style="left:1422.0px;top:394.7px;width:2058.7px;height:26.4px;background:#e3894f;border-radius:8.0px"></div>
<div class="r" style="left:1422.5px;top:404.7px;width:6.0px;height:7.0px;background:#c9cdd2"></div>
<div class="r" style="left:3481.7px;top:404.7px;width:6.0px;height:7.0px;background:#c9cdd2"></div>
<div class="t" style="left:3498.7px;top:394.0px;font-size:34.80px;color:#a9a9a9;-webkit-text-stroke:0.5px currentColor">303.08ms</div>
<div class="r" style="left:205.8px;top:444.8px;width:1210.2px;height:74.1px;background:#242321"></div>
<div class="r" style="left:205.8px;top:515.7px;width:1210.2px;height:3.2px;background:#cf7f4b"></div>
<div class="r" style="left:41.7px;top:444.8px;width:2.5px;height:74.7px;background:#38393d"></div>
<div class="r" style="left:82.9px;top:444.8px;width:2.5px;height:74.7px;background:#38393d"></div>
<div class="r" style="left:124.1px;top:444.8px;width:2.5px;height:74.7px;background:#38393d"></div>
<div class="r" style="left:165.3px;top:444.8px;width:2.5px;height:74.7px;background:#38393d"></div>
<svg class="r" style="left:175.8px;top:477.8px" width="21" height="14" viewBox="0 0 21 14"><path d="M3 3 L10.5 10.5 L18 3" fill="none" stroke="#e0e0e0" stroke-width="3.2" stroke-linecap="round" stroke-linejoin="round"/></svg>
<div class="t" style="left:217.3px;top:463.0px;font-size:37.00px;color:#a9a9a9;-webkit-text-stroke:0.5px currentColor;word-spacing:4px">sequence (302.95ms)</div>
<div class="r" style="left:1422.8px;top:468.8px;width:2055.2px;height:26.4px;background:#e3894f;border-radius:8.0px"></div>
<div class="r" style="left:1423.3px;top:478.8px;width:6.0px;height:7.0px;background:#c9cdd2"></div>
<div class="r" style="left:1721.0px;top:478.8px;width:6.0px;height:7.0px;background:#c9cdd2"></div>
<div class="r" style="left:2263.0px;top:478.8px;width:6.0px;height:7.0px;background:#c9cdd2"></div>
<div class="r" style="left:3479.0px;top:478.8px;width:6.0px;height:7.0px;background:#c9cdd2"></div>
<div class="t" style="left:3496.0px;top:468.1px;font-size:34.80px;color:#a9a9a9;-webkit-text-stroke:0.5px currentColor">302.95ms</div>
<div class="r" style="left:247.0px;top:518.9px;width:1169.0px;height:74.1px;background:#242321"></div>
<div class="r" style="left:247.0px;top:589.8px;width:1169.0px;height:3.2px;background:#cf7f4b"></div>
<div class="r" style="left:41.7px;top:518.9px;width:2.5px;height:74.7px;background:#38393d"></div>
<div class="r" style="left:82.9px;top:518.9px;width:2.5px;height:74.7px;background:#38393d"></div>
<div class="r" style="left:124.1px;top:518.9px;width:2.5px;height:74.7px;background:#38393d"></div>
<div class="r" style="left:165.3px;top:518.9px;width:2.5px;height:74.7px;background:#38393d"></div>
<div class="r" style="left:206.5px;top:518.9px;width:2.5px;height:74.7px;background:#38393d"></div>
<svg class="r" style="left:217.0px;top:551.9px" width="21" height="14" viewBox="0 0 21 14"><path d="M3 3 L10.5 10.5 L18 3" fill="none" stroke="#e0e0e0" stroke-width="3.2" stroke-linecap="round" stroke-linejoin="round"/></svg>
<div class="t" style="left:258.5px;top:537.1px;font-size:37.00px;color:#a9a9a9;-webkit-text-stroke:0.5px currentColor;word-spacing:4px">fetch (43.97ms)</div>
<div class="r" style="left:1422.8px;top:542.9px;width:296.9px;height:26.4px;background:#e3894f;border-radius:8.0px"></div>
<div class="r" style="left:1423.3px;top:552.9px;width:6.0px;height:7.0px;background:#c9cdd2"></div>
<div class="r" style="left:1720.7px;top:552.9px;width:6.0px;height:7.0px;background:#c9cdd2"></div>
<div class="t" style="left:1737.7px;top:542.3px;font-size:34.80px;color:#a9a9a9;-webkit-text-stroke:0.5px currentColor">43.97ms</div>
<div class="r" style="left:288.2px;top:593.0px;width:1127.8px;height:74.1px;background:#242321"></div>
<div class="r" style="left:288.2px;top:664.0px;width:1127.8px;height:3.2px;background:#cf7f4b"></div>
<div class="r" style="left:41.7px;top:593.0px;width:2.5px;height:74.7px;background:#38393d"></div>
<div class="r" style="left:82.9px;top:593.0px;width:2.5px;height:74.7px;background:#38393d"></div>
<div class="r" style="left:124.1px;top:593.0px;width:2.5px;height:74.7px;background:#38393d"></div>
<div class="r" style="left:165.3px;top:593.0px;width:2.5px;height:74.7px;background:#38393d"></div>
<div class="r" style="left:206.5px;top:593.0px;width:2.5px;height:74.7px;background:#38393d"></div>
<div class="r" style="left:247.7px;top:593.0px;width:2.5px;height:74.7px;background:#38393d"></div>
<svg class="r" style="left:258.2px;top:626.0px" width="21" height="14" viewBox="0 0 21 14"><path d="M3 3 L10.5 10.5 L18 3" fill="none" stroke="#e0e0e0" stroke-width="3.2" stroke-linecap="round" stroke-linejoin="round"/></svg>
<div class="t" style="left:299.7px;top:611.2px;font-size:37.00px;color:#a9a9a9;-webkit-text-stroke:0.5px currentColor;word-spacing:4px">subgraph (43.94ms)</div>
<div class="r" style="left:1422.8px;top:617.0px;width:296.9px;height:26.4px;background:#e3894f;border-radius:8.0px"></div>
<div class="r" style="left:1423.3px;top:627.0px;width:6.0px;height:7.0px;background:#c9cdd2"></div>
<div class="r" style="left:1720.7px;top:627.0px;width:6.0px;height:7.0px;background:#c9cdd2"></div>
<div class="t" style="left:1737.7px;top:616.4px;font-size:34.80px;color:#a9a9a9;-webkit-text-stroke:0.5px currentColor">43.94ms</div>
<div class="r" style="left:329.4px;top:667.2px;width:1086.6px;height:74.1px;background:#242321"></div>
<div class="r" style="left:329.4px;top:738.1px;width:1086.6px;height:3.2px;background:#cf7f4b"></div>
<div class="r" style="left:41.7px;top:667.2px;width:2.5px;height:74.7px;background:#38393d"></div>
<div class="r" style="left:82.9px;top:667.2px;width:2.5px;height:74.7px;background:#38393d"></div>
<div class="r" style="left:124.1px;top:667.2px;width:2.5px;height:74.7px;background:#38393d"></div>
<div class="r" style="left:165.3px;top:667.2px;width:2.5px;height:74.7px;background:#38393d"></div>
<div class="r" style="left:206.5px;top:667.2px;width:2.5px;height:74.7px;background:#38393d"></div>
<div class="r" style="left:247.7px;top:667.2px;width:2.5px;height:74.7px;background:#38393d"></div>
<div class="r" style="left:288.9px;top:667.2px;width:2.5px;height:74.7px;background:#38393d"></div>
<svg class="r" style="left:299.4px;top:700.2px" width="21" height="14" viewBox="0 0 21 14"><path d="M3 3 L10.5 10.5 L18 3" fill="none" stroke="#e0e0e0" stroke-width="3.2" stroke-linecap="round" stroke-linejoin="round"/></svg>
<div class="t" style="left:340.9px;top:685.3px;font-size:37.00px;color:#a9a9a9;-webkit-text-stroke:0.5px currentColor;word-spacing:4px">subgraph_request (43.87ms)</div>
<div class="r" style="left:1422.8px;top:691.2px;width:296.9px;height:26.4px;background:#e3894f;border-radius:8.0px"></div>
<div class="r" style="left:1423.3px;top:701.2px;width:6.0px;height:7.0px;background:#c9cdd2"></div>
<div class="r" style="left:1720.7px;top:701.2px;width:6.0px;height:7.0px;background:#c9cdd2"></div>
<div class="t" style="left:1737.7px;top:690.5px;font-size:34.80px;color:#a9a9a9;-webkit-text-stroke:0.5px currentColor">43.87ms</div>
<div class="r" style="left:370.6px;top:741.3px;width:1045.4px;height:74.1px;background:#242321"></div>
<div class="r" style="left:370.6px;top:812.2px;width:1045.4px;height:3.2px;background:#cf7f4b"></div>
<div class="r" style="left:41.7px;top:741.3px;width:2.5px;height:74.7px;background:#38393d"></div>
<div class="r" style="left:82.9px;top:741.3px;width:2.5px;height:74.7px;background:#38393d"></div>
<div class="r" style="left:124.1px;top:741.3px;width:2.5px;height:74.7px;background:#38393d"></div>
<div class="r" style="left:165.3px;top:741.3px;width:2.5px;height:74.7px;background:#38393d"></div>
<div class="r" style="left:206.5px;top:741.3px;width:2.5px;height:74.7px;background:#38393d"></div>
<div class="r" style="left:247.7px;top:741.3px;width:2.5px;height:74.7px;background:#38393d"></div>
<div class="r" style="left:288.9px;top:741.3px;width:2.5px;height:74.7px;background:#38393d"></div>
<div class="r" style="left:330.1px;top:741.3px;width:2.5px;height:74.7px;background:#38393d"></div>
<div class="t" style="left:382.1px;top:759.5px;font-size:37.00px;color:#a9a9a9;-webkit-text-stroke:0.5px currentColor;word-spacing:4px">http_request (43.8ms)</div>
<div class="r" style="left:1422.8px;top:765.3px;width:296.9px;height:26.4px;background:#e3894f;border-radius:8.0px"></div>
<div class="r" style="left:1426.8px;top:773.3px;width:288.9px;height:10.0px;background:#141414"></div>
<div class="r" style="left:1425.8px;top:773.3px;width:3.0px;height:10.0px;background:#c9cdd2"></div>
<div class="r" style="left:1713.7px;top:773.3px;width:3.0px;height:10.0px;background:#c9cdd2"></div>
<div class="t" style="left:1737.7px;top:764.6px;font-size:34.80px;color:#a9a9a9;-webkit-text-stroke:0.5px currentColor">43.8ms</div>
<div class="r" style="left:247.0px;top:815.4px;width:1169.0px;height:74.1px;background:#242321"></div>
<div class="r" style="left:247.0px;top:886.4px;width:1169.0px;height:3.2px;background:#cf7f4b"></div>
<div class="r" style="left:41.7px;top:815.4px;width:2.5px;height:74.7px;background:#38393d"></div>
<div class="r" style="left:82.9px;top:815.4px;width:2.5px;height:74.7px;background:#38393d"></div>
<div class="r" style="left:124.1px;top:815.4px;width:2.5px;height:74.7px;background:#38393d"></div>
<div class="r" style="left:165.3px;top:815.4px;width:2.5px;height:74.7px;background:#38393d"></div>
<div class="r" style="left:206.5px;top:815.4px;width:2.5px;height:74.7px;background:#38393d"></div>
<svg class="r" style="left:217.0px;top:848.4px" width="21" height="14" viewBox="0 0 21 14"><path d="M3 3 L10.5 10.5 L18 3" fill="none" stroke="#e0e0e0" stroke-width="3.2" stroke-linecap="round" stroke-linejoin="round"/></svg>
<div class="t" style="left:258.5px;top:833.6px;font-size:37.00px;color:#a9a9a9;-webkit-text-stroke:0.5px currentColor;word-spacing:4px">flatten (80.1ms)</div>
<div class="r" style="left:1719.7px;top:839.4px;width:544.3px;height:26.4px;background:#e3894f;border-radius:8.0px"></div>
<div class="r" style="left:1720.2px;top:849.4px;width:6.0px;height:7.0px;background:#c9cdd2"></div>
<div class="r" style="left:2265.0px;top:849.4px;width:6.0px;height:7.0px;background:#c9cdd2"></div>
<div class="t" style="left:2282.0px;top:838.8px;font-size:34.80px;color:#a9a9a9;-webkit-text-stroke:0.5px currentColor">80.1ms</div>
<div class="r" style="left:288.2px;top:889.6px;width:1127.8px;height:74.1px;background:#242321"></div>
<div class="r" style="left:288.2px;top:960.5px;width:1127.8px;height:3.2px;background:#cf7f4b"></div>
<div class="r" style="left:41.7px;top:889.6px;width:2.5px;height:74.7px;background:#38393d"></div>
<div class="r" style="left:82.9px;top:889.6px;width:2.5px;height:74.7px;background:#38393d"></div>
<div class="r" style="left:124.1px;top:889.6px;width:2.5px;height:74.7px;background:#38393d"></div>
<div class="r" style="left:165.3px;top:889.6px;width:2.5px;height:74.7px;background:#38393d"></div>
<div class="r" style="left:206.5px;top:889.6px;width:2.5px;height:74.7px;background:#38393d"></div>
<div class="r" style="left:247.7px;top:889.6px;width:2.5px;height:74.7px;background:#38393d"></div>
<svg class="r" style="left:258.2px;top:922.6px" width="21" height="14" viewBox="0 0 21 14"><path d="M3 3 L10.5 10.5 L18 3" fill="none" stroke="#e0e0e0" stroke-width="3.2" stroke-linecap="round" stroke-linejoin="round"/></svg>
<div class="t" style="left:299.7px;top:907.7px;font-size:37.00px;color:#a9a9a9;-webkit-text-stroke:0.5px currentColor;word-spacing:4px">fetch (80.08ms)</div>
<div class="r" style="left:1719.7px;top:913.6px;width:544.3px;height:26.4px;background:#e3894f;border-radius:8.0px"></div>
<div class="r" style="left:1720.2px;top:923.6px;width:6.0px;height:7.0px;background:#c9cdd2"></div>
<div class="r" style="left:2265.0px;top:923.6px;width:6.0px;height:7.0px;background:#c9cdd2"></div>
<div class="t" style="left:2282.0px;top:912.9px;font-size:34.80px;color:#a9a9a9;-webkit-text-stroke:0.5px currentColor">80.08ms</div>
<div class="r" style="left:329.4px;top:963.7px;width:1086.6px;height:74.1px;background:#242321"></div>
<div class="r" style="left:329.4px;top:1034.6px;width:1086.6px;height:3.2px;background:#cf7f4b"></div>
<div class="r" style="left:41.7px;top:963.7px;width:2.5px;height:74.7px;background:#38393d"></div>
<div class="r" style="left:82.9px;top:963.7px;width:2.5px;height:74.7px;background:#38393d"></div>
<div class="r" style="left:124.1px;top:963.7px;width:2.5px;height:74.7px;background:#38393d"></div>
<div class="r" style="left:165.3px;top:963.7px;width:2.5px;height:74.7px;background:#38393d"></div>
<div class="r" style="left:206.5px;top:963.7px;width:2.5px;height:74.7px;background:#38393d"></div>
<div class="r" style="left:247.7px;top:963.7px;width:2.5px;height:74.7px;background:#38393d"></div>
<div class="r" style="left:288.9px;top:963.7px;width:2.5px;height:74.7px;background:#38393d"></div>
<svg class="r" style="left:299.4px;top:996.7px" width="21" height="14" viewBox="0 0 21 14"><path d="M3 3 L10.5 10.5 L18 3" fill="none" stroke="#e0e0e0" stroke-width="3.2" stroke-linecap="round" stroke-linejoin="round"/></svg>
<div class="t" style="left:340.9px;top:981.9px;font-size:37.00px;color:#a9a9a9;-webkit-text-stroke:0.5px currentColor;word-spacing:4px">subgraph (80.02ms)</div>
<div class="r" style="left:1719.7px;top:987.7px;width:544.3px;height:26.4px;background:#e3894f;border-radius:8.0px"></div>
<div class="r" style="left:1720.2px;top:997.7px;width:6.0px;height:7.0px;background:#c9cdd2"></div>
<div class="r" style="left:2265.0px;top:997.7px;width:6.0px;height:7.0px;background:#c9cdd2"></div>
<div class="t" style="left:2282.0px;top:987.0px;font-size:34.80px;color:#a9a9a9;-webkit-text-stroke:0.5px currentColor">80.02ms</div>
<div class="r" style="left:370.6px;top:1037.8px;width:1045.4px;height:74.1px;background:#242321"></div>
<div class="r" style="left:370.6px;top:1108.8px;width:1045.4px;height:3.2px;background:#cf7f4b"></div>
<div class="r" style="left:41.7px;top:1037.8px;width:2.5px;height:74.7px;background:#38393d"></div>
<div class="r" style="left:82.9px;top:1037.8px;width:2.5px;height:74.7px;background:#38393d"></div>
<div class="r" style="left:124.1px;top:1037.8px;width:2.5px;height:74.7px;background:#38393d"></div>
<div class="r" style="left:165.3px;top:1037.8px;width:2.5px;height:74.7px;background:#38393d"></div>
<div class="r" style="left:206.5px;top:1037.8px;width:2.5px;height:74.7px;background:#38393d"></div>
<div class="r" style="left:247.7px;top:1037.8px;width:2.5px;height:74.7px;background:#38393d"></div>
<div class="r" style="left:288.9px;top:1037.8px;width:2.5px;height:74.7px;background:#38393d"></div>
<div class="r" style="left:330.1px;top:1037.8px;width:2.5px;height:74.7px;background:#38393d"></div>
<svg class="r" style="left:340.6px;top:1070.8px" width="21" height="14" viewBox="0 0 21 14"><path d="M3 3 L10.5 10.5 L18 3" fill="none" stroke="#e0e0e0" stroke-width="3.2" stroke-linecap="round" stroke-linejoin="round"/></svg>
<div class="t" style="left:382.1px;top:1056.0px;font-size:37.00px;color:#a9a9a9;-webkit-text-stroke:0.5px currentColor;word-spacing:4px">subgraph_request (80.01ms)</div>
<div class="r" style="left:1719.7px;top:1061.8px;width:544.3px;height:26.4px;background:#e3894f;border-radius:8.0px"></div>
<div class="r" style="left:1720.2px;top:1071.8px;width:6.0px;height:7.0px;background:#c9cdd2"></div>
<div class="r" style="left:2265.0px;top:1071.8px;width:6.0px;height:7.0px;background:#c9cdd2"></div>
<div class="t" style="left:2282.0px;top:1061.2px;font-size:34.80px;color:#a9a9a9;-webkit-text-stroke:0.5px currentColor">80.01ms</div>
</div>
</body></html>
